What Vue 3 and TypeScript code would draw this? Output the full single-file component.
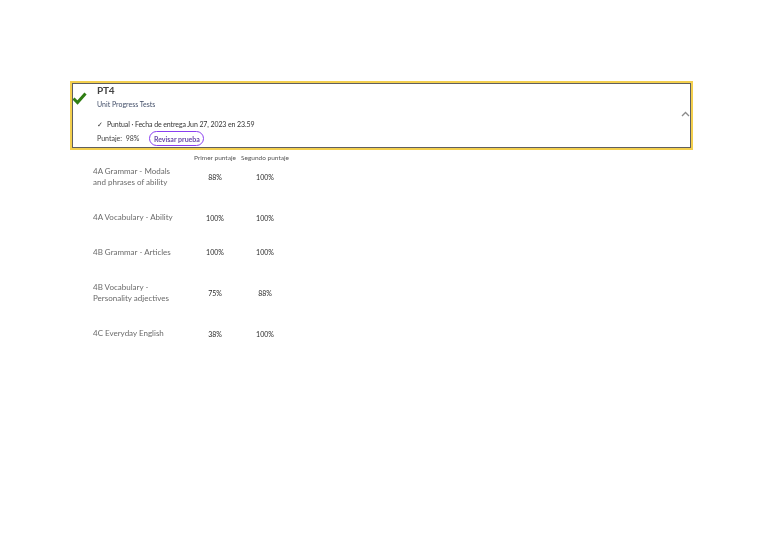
<script setup lang="ts">
interface Row { label: string; first: string; second: string; tall: boolean }
const rows: Row[] = [
  { label: '4A Grammar - Modals and phrases of ability', first: '88%', second: '100%', tall: true },
  { label: '4A Vocabulary - Ability', first: '100%', second: '100%', tall: false },
  { label: '4B Grammar - Articles', first: '100%', second: '100%', tall: false },
  { label: '4B Vocabulary - Personality adjectives', first: '75%', second: '88%', tall: true },
  { label: '4C Everyday English', first: '38%', second: '100%', tall: false },
]
</script>

<template>
  <div class="page">
    <section class="card">
      <svg class="check" width="15" height="13" viewBox="0 0 15 13">
        <path d="M1.5 6.5 L5.5 10.5 L13.5 1.5" fill="none" stroke="#2f7d12" stroke-width="3" />
      </svg>
      <div class="info">
        <h1 class="title">PT4</h1>
        <p class="sub">Unit Progress Tests</p>
        <p class="due"><span class="tick">✓</span>Puntual · Fecha de entrega Jun 27, 2023 en 23.59</p>
        <div class="score">
          <span>Puntaje:&nbsp; 98%</span>
          <button class="review">Revisar prueba</button>
        </div>
      </div>
      <svg class="chev" width="9" height="6" viewBox="0 0 9 6">
        <path d="M1 5 L4.5 1.5 L8 5" fill="none" stroke="#8a8a8a" stroke-width="1.3" />
      </svg>
    </section>

    <div class="table">
      <div class="head">
        <span></span>
        <span class="hcell">Primer puntaje</span>
        <span class="hcell">Segundo puntaje</span>
      </div>
      <div class="rows">
        <div v-for="r in rows" :key="r.label" class="row" :class="{ tall: r.tall }">
          <span class="label">{{ r.label }}</span>
          <span class="val">{{ r.first }}</span>
          <span class="val">{{ r.second }}</span>
        </div>
      </div>
    </div>
  </div>
</template>

<style>
html, body { background: #fff; }
</style>

<style scoped>
.page {
  box-sizing: border-box;
  width: 768px;
  height: 543px;
  padding: 81px 0 0 70px;
  font-family: "Lato", "Liberation Sans", sans-serif;
  color: #3c3c3c;
  filter: blur(0.45px);
}
.card {
  box-sizing: border-box;
  position: relative;
  width: 623px;
  height: 69px;
  border: 2px solid #f3cf4e;
  outline: 1px solid #5f5f5f;
  outline-offset: -3px;
  display: flex;
}
.check { margin: 9px 0 0 0; flex: none; }
.info { margin-left: 10px; padding-top: 1px; }
.title { margin: 0; font-size: 10px; line-height: 12px; font-weight: 700; letter-spacing: -0.2px; color: #444; }
.sub { margin: 3px 0 0; font-size: 7px; line-height: 10px; color: #44506a; }
.due { margin: 10px 0 0; font-size: 7px; line-height: 11px; letter-spacing: -0.1px; color: #333; }
.tick { display: inline-block; width: 10px; font-size: 7px; }
.score { margin-top: -1px; display: flex; align-items: center; gap: 10px; font-size: 7px; color: #444; }
.review {
  box-sizing: border-box;
  height: 15px;
  width: 55px;
  margin-top: 2px;
  padding: 0;
  border: 1px solid #8a3ff0;
  border-radius: 8px;
  background: #fff;
  color: #6a4aa8;
  font: 700 7px "Lato", "Liberation Sans", sans-serif;
}
.chev { position: absolute; right: 1px; top: 28px; }
.table { width: 240px; margin-left: 23px; }
.head, .row { display: grid; grid-template-columns: 100px 44px 56px; align-items: center; }
.head { height: 14px; }
.hcell { font-size: 6.5px; color: #555; text-align: center; white-space: nowrap; }
.rows { display: flex; flex-direction: column; gap: 20.7px; }
.row { height: 14px; }
.row.tall { height: 26px; }
.label { font-size: 8px; line-height: 11px; color: #6a6a6a; width: 84px; }
.val { font-size: 7px; color: #2a2a2a; text-align: center; }
</style>
